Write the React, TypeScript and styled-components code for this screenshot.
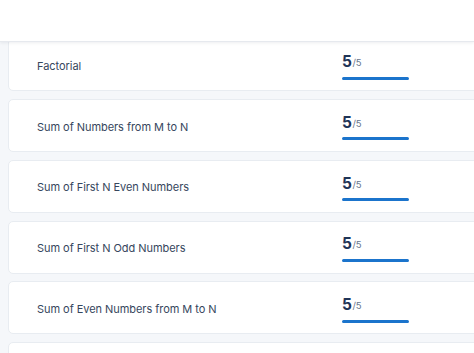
import React from 'react';
import styled, { createGlobalStyle } from 'styled-components';

const GlobalStyle = createGlobalStyle`
  html, body {
    margin: 0;
    padding: 0;
    background: #f5f7fa;
    overflow: hidden;
  }
  body {
    font-family: Inter, "Noto Sans", sans-serif;
  }
`;

const Header = styled.header`
  position: fixed;
  top: 0;
  left: 0;
  right: 0;
  height: 41px;
  background: #ffffff;
  border-bottom: 1px solid #e6e9ee;
  box-shadow: 0 1px 3px rgba(30, 41, 59, 0.08);
  z-index: 2;
`;

const List = styled.div`
  display: flex;
  flex-direction: column;
  gap: 7.75px;
  padding: 38.25px 0 0 8px;
  width: 560px;
`;

const Card = styled.div`
  box-sizing: border-box;
  height: 53px;
  display: grid;
  grid-template-columns: 305px 67px;
  align-items: center;
  padding: 0 28px;
  background: #ffffff;
  border: 1px solid #e8ecf1;
  border-radius: 5px;
`;

const Title = styled.div`
  font-size: 11px;
  color: #36465d;
  letter-spacing: -0.05px;
  padding-top: 2px;
`;

const Score = styled.div`
  display: flex;
  flex-direction: column;
  gap: 7.5px;
  padding-top: 5px;
`;

const Value = styled.div`
  display: flex;
  align-items: baseline;
  line-height: 14px;
  height: 14px;
`;

const Big = styled.span`
  font-size: 15.5px;
  font-weight: 700;
  color: #1f3457;
`;

const Small = styled.span`
  font-size: 9.5px;
  color: #66758b;
  margin-left: 0.5px;
  position: relative;
  top: -1px;
`;

const Bar = styled.div<{ $pct: number }>`
  height: 3px;
  width: 67px;
  border-radius: 2px;
  background: #e3e8ef;
  overflow: hidden;
  &::after {
    content: '';
    display: block;
    height: 100%;
    width: ${(p) => p.$pct}%;
    background: #1b74cc;
  }
`;

const items = [
  { name: 'Factorial', score: 5, total: 5 },
  { name: 'Sum of Numbers from M to N', score: 5, total: 5 },
  { name: 'Sum of First N Even Numbers', score: 5, total: 5 },
  { name: 'Sum of First N Odd Numbers', score: 5, total: 5 },
  { name: 'Sum of Even Numbers from M to N', score: 5, total: 5 },
];

const App = () => {
  return (
    <>
      <GlobalStyle />
      <Header />
      <List>
        {items.map((it) => (
          <Card key={it.name}>
            <Title>{it.name}</Title>
            <Score>
              <Value>
                <Big>{it.score}</Big>
                <Small>/{it.total}</Small>
              </Value>
              <Bar $pct={(it.score / it.total) * 100} />
            </Score>
          </Card>
        ))}
        {/* next row, only its top edge shows */}
        <Card />
      </List>
    </>
  );
};

export default App;
